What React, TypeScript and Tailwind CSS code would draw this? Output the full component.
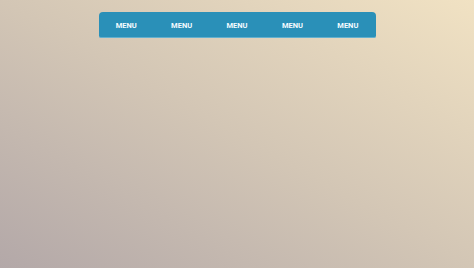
export default function App() {
  const items = ["MENU", "MENU", "MENU", "MENU", "MENU"];

  return (
    <div className="h-[268px] w-full bg-linear-to-tr from-[#b3a8a8] via-[#d3c6b5] to-[#f1e2c3] font-['Roboto',sans-serif]">
      <div className="flex justify-center pt-3">
        <nav className="flex h-[26px] w-[277px] rounded-t-[4px] rounded-b-[2px] border-b-[1.5px] border-[#62b0cf] bg-[#2a90b8] pt-[2px]">
          {items.map((label, i) => (
            <a
              key={i}
              href="#"
              className="flex flex-1 items-center justify-center text-[7.5px] font-bold text-[#f4fbff]"
            >
              {label}
            </a>
          ))}
        </nav>
      </div>
    </div>
  );
}
